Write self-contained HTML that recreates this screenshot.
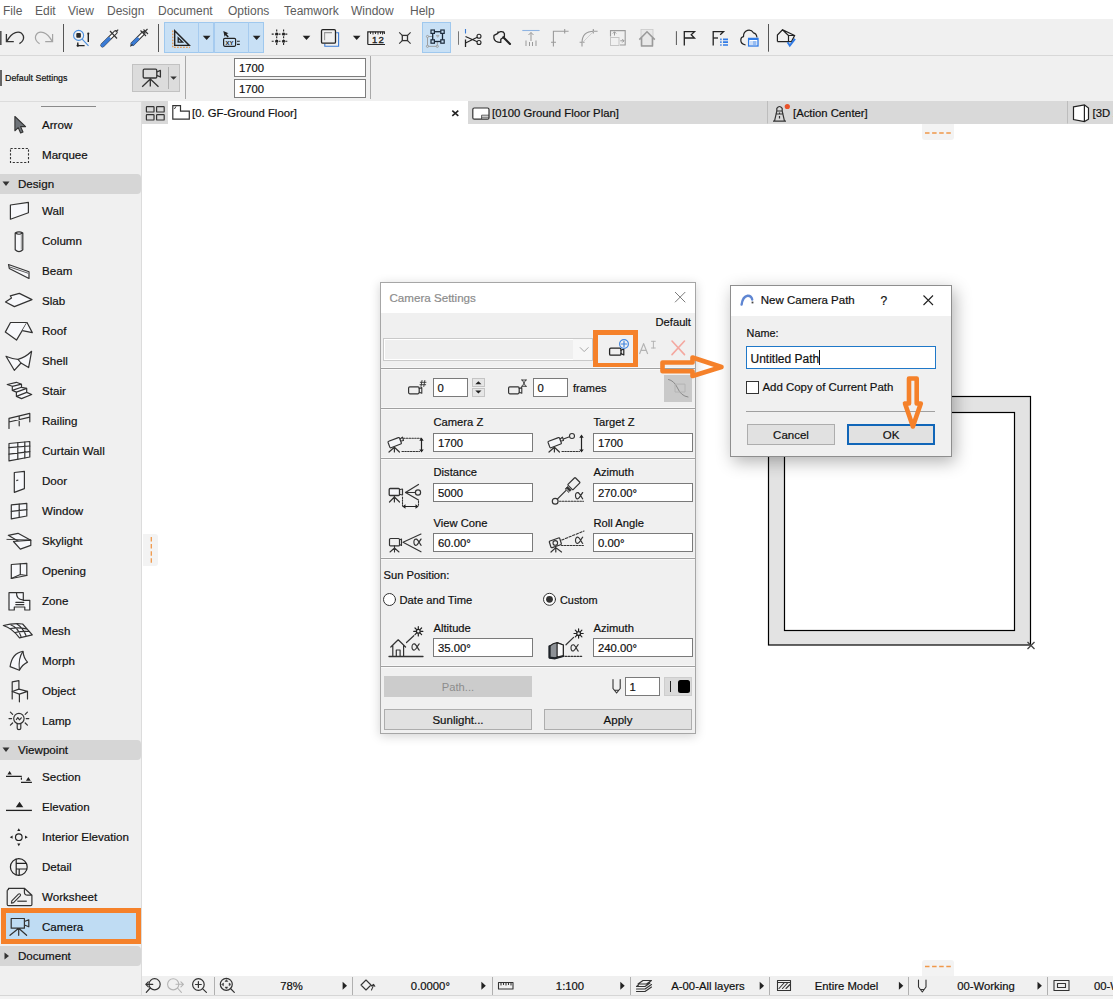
<!DOCTYPE html>
<html><head><meta charset="utf-8">
<style>
html,body{margin:0;padding:0;width:1113px;height:999px;overflow:hidden;background:#fff;}
body{font-family:"Liberation Sans",sans-serif;color:#1a1a1a;position:relative;}
.t,.r,.btn{-webkit-text-stroke:0.2px currentColor;}
.a{position:absolute;}
.t{position:absolute;line-height:1;white-space:nowrap;}
.r{position:absolute;height:20px;line-height:20px;white-space:nowrap;}
svg{position:absolute;overflow:visible;}
.mn{font-size:12px;color:#5c5c5c;top:5px;margin-left:-1px;-webkit-text-stroke:0 !important;}
.sb{font-size:11.6px;color:#111;left:42px;}
.hd{position:absolute;left:0;width:141px;height:20px;background:#d6d6d6;border-radius:0 4px 4px 0;}
.hdt{font-size:11.6px;color:#111;left:18px;}
.dl{font-size:11.2px;color:#111;}
.inp{position:absolute;background:#fff;border:1px solid #7a7a7a;box-sizing:border-box;}
.it{font-size:11px;color:#111;}
.sep{position:absolute;background:#a0a0a0;height:1px;box-shadow:0 1px 0 #fafafa,0 -1px 0 #f7f7f7;}
.btn{position:absolute;background:#e1e1e1;border:1px solid #adadad;box-sizing:border-box;text-align:center;font-size:11.2px;color:#111;}
.st{font-size:11.3px;color:#111;}
.vs{position:absolute;width:1px;background:#a0a0a0;}
.ic{fill:none;stroke:#333;stroke-width:1.2;stroke-linejoin:round;stroke-linecap:round;}

</style></head><body>
<!-- MENU -->
<div class="a" style="left:0;top:0;width:1113px;height:19px;background:#fff"></div>
<div class="t mn" style="left:4px">File</div>
<div class="t mn" style="left:36px">Edit</div>
<div class="t mn" style="left:69px">View</div>
<div class="t mn" style="left:108px">Design</div>
<div class="t mn" style="left:159px">Document</div>
<div class="t mn" style="left:229px">Options</div>
<div class="t mn" style="left:285px">Teamwork</div>
<div class="t mn" style="left:352px">Window</div>
<div class="t mn" style="left:411px">Help</div>
<!-- TOOLBAR BG -->
<div class="a" style="left:0;top:19px;width:1113px;height:36px;background:#f0f0f0"></div>
<div class="a" style="left:0;top:55px;width:1113px;height:1px;background:#d8d8d8"></div>
<!-- INFOBOX BG -->
<div class="a" style="left:0;top:56px;width:1113px;height:45px;background:#f0f0f0"></div>
<div class="a" style="left:0;top:101px;width:142px;height:1px;background:#dcdcdc"></div>
<!-- TABBAR BG -->
<div class="a" style="left:142px;top:101px;width:971px;height:23px;background:#d9d9d9"></div>
<div class="a" style="left:168px;top:101px;width:300px;height:23px;background:#fff"></div>
<!-- SIDEBAR BG -->
<div class="a" style="left:0;top:102px;width:141px;height:874px;background:#f0f0f0"></div>
<div class="a" style="left:141px;top:102px;width:1px;height:893px;background:#dcdcdc"></div>
<!-- STATUS BG -->
<div class="a" style="left:0;top:976px;width:1113px;height:19px;background:#f0f0f0"></div>
<div class="a" style="left:0;top:995px;width:1113px;height:1px;background:#d6d6d6"></div>
<div class="a" style="left:0;top:996px;width:1113px;height:3px;background:#f3f3f3"></div>
<div class="a" style="left:141px;top:976px;width:1px;height:19px;background:#dcdcdc"></div>
<!-- WALL SQUARE -->
<svg style="left:0;top:0" width="1113" height="999" viewBox="0 0 1113 999">
<path d="M768.5,396.5 H1030.5 V645 H768.5 Z M784.5,412.5 V630.5 H1014.5 V412.5 Z" fill="#e3e3e3" fill-rule="evenodd"/>
<rect x="768.5" y="396.5" width="262" height="248.5" fill="none" stroke="#000" stroke-width="1.2"/>
<rect x="784.5" y="412.5" width="230" height="218" fill="none" stroke="#000" stroke-width="1.2"/>
<path d="M1027.5,642 L1034.5,649 M1034.5,642 L1027.5,649" stroke="#444" stroke-width="1.3"/>
</svg>
<div class="a" style="left:41px;top:106px;width:55px;height:1px;background:#8a8a8a"></div>
<svg style="left:8px;top:114px" width="22" height="22" viewBox="0 0 22 22"><path d="M6.9,2.5 L6.9,16.8 L10.2,13.6 L12.6,19 L15,18 L12.6,12.6 L17.6,12.6 Z" fill="#6e7378" stroke="#333" stroke-width="1.1" stroke-linejoin="round"/></svg>
<div class="r sb" style="top:115px">Arrow</div>
<svg style="left:8px;top:144px" width="22" height="22" viewBox="0 0 22 22"><rect x="2.5" y="4.5" width="18" height="14" fill="none" stroke="#333" stroke-width="1.1" stroke-dasharray="2.2,1.6"/></svg>
<div class="r sb" style="top:145px">Marquee</div>
<div class="hd" style="top:174px"></div><svg style="left:2px;top:181px" width="8" height="6"><path d="M0.5,0.5 H7.5 L4,5 Z" fill="#333"/></svg><div class="r hdt" style="top:174px">Design</div>
<svg style="left:8px;top:200px" width="22" height="22" viewBox="0 0 22 22"><path fill="#f7f8fb" stroke="#333" stroke-width="1.2" stroke-linejoin="round" d="M2.4,5 L20.4,2.4 L20.4,12.7 L2.4,19.2 Z"/></svg>
<div class="r sb" style="top:201px">Wall</div>
<svg style="left:8px;top:230px" width="22" height="22" viewBox="0 0 22 22"><path fill="#f7f8fb" stroke="#333" stroke-width="1.2" stroke-linejoin="round" d="M7.2,3 Q11,0.6 14.8,3 V19.8 Q11,23.4 7.2,19.8 Z"/><path d="M7.2,3 Q11,5.4 14.8,3" fill="none" stroke="#333" stroke-width="1.1"/><path d="M13.3,4.5 V19.5" stroke="#999" stroke-width="1"/></svg>
<div class="r sb" style="top:231px">Column</div>
<svg style="left:8px;top:260px" width="22" height="22" viewBox="0 0 22 22"><path fill="#f7f8fb" stroke="#333" stroke-width="1.2" stroke-linejoin="round" d="M0.5,4.5 L21,11.8 V18.5 L1.3,8.5 Z"/><path d="M1.2,6.8 L20,13.2" stroke="#333" stroke-width="0.8"/></svg>
<div class="r sb" style="top:261px">Beam</div>
<svg style="left:8px;top:290px" width="22" height="22" viewBox="0 0 22 22"><path fill="#f7f8fb" stroke="#333" stroke-width="1.2" stroke-linejoin="round" d="M-2.5,12 L3.5,8 L2.3,5.8 L11.3,3.4 L24,9.6 L6.4,16.6 Z"/></svg>
<div class="r sb" style="top:291px">Slab</div>
<svg style="left:8px;top:320px" width="22" height="22" viewBox="0 0 22 22"><path fill="#f7f8fb" stroke="#333" stroke-width="1.2" stroke-linejoin="round" d="M2.5,2.5 H19 L8.5,20.1 L-2.7,12.1 Z"/><path fill="#f7f8fb" stroke="#333" stroke-width="1.2" stroke-linejoin="round" d="M19,2.5 L24.3,12.6 L14.4,10.6"/></svg>
<div class="r sb" style="top:321px">Roof</div>
<svg style="left:8px;top:350px" width="22" height="22" viewBox="0 0 22 22"><path fill="#f7f8fb" stroke="#333" stroke-width="1.2" stroke-linejoin="round" d="M-2,6.3 Q5,9.3 10,9.3 Q17,7.8 23.6,1.3 L20.6,17.6 L13,13 L6.3,20.3 Z"/><path d="M10,9.3 L13,13" fill="none" stroke="#333" stroke-width="1.1"/></svg>
<div class="r sb" style="top:351px">Shell</div>
<svg style="left:8px;top:380px" width="22" height="22" viewBox="0 0 22 22"><path fill="#f7f8fb" stroke="#333" stroke-width="1.2" stroke-linejoin="round" d="M-0.8,4.5 L8.4,2.3 L13.5,4.2 V7.3 L18.7,8.4 V12.4 L23.7,14.5 L13.5,18.6 L8.4,16.4 V12.1 L4.3,10.4 V6.3 Z"/><path d="M4.3,6.3 L13.5,4.2 M4.3,10.4 L13.5,7.3 M8.4,12.1 L18.7,8.4 M8.4,16.4 L18.7,12.4" fill="none" stroke="#333" stroke-width="1.2"/></svg>
<div class="r sb" style="top:381px">Stair</div>
<svg style="left:8px;top:410px" width="22" height="22" viewBox="0 0 22 22"><path class="ic" d="M1,8.4 L21.8,3.4 M1,12 L21.8,7.2 M1,8.4 V18.5 M11.2,6 V15.8 M21.8,3.4 V11.8"/></svg>
<div class="r sb" style="top:411px">Railing</div>
<svg style="left:8px;top:440px" width="22" height="22" viewBox="0 0 22 22"><path fill="#f7f8fb" stroke="#333" stroke-width="1.2" stroke-linejoin="round" d="M1,3.5 L21.8,1.5 V17 L1,20.8 Z"/><path class="ic" d="M1,7.6 L21.8,6 M1,14.2 L21.8,11.6 M9.8,2.6 V19.2 M16.8,2 V18"/></svg>
<div class="r sb" style="top:441px">Curtain Wall</div>
<svg style="left:8px;top:470px" width="22" height="22" viewBox="0 0 22 22"><path fill="#f7f8fb" stroke="#333" stroke-width="1.2" stroke-linejoin="round" d="M6.3,2.5 L16.4,1.3 V18.6 L6.3,22.4 Z"/><path d="M8.3,10.6 L10.3,10" stroke="#333" stroke-width="1.1"/></svg>
<div class="r sb" style="top:471px">Door</div>
<svg style="left:8px;top:500px" width="22" height="22" viewBox="0 0 22 22"><path fill="#f7f8fb" stroke="#333" stroke-width="1.2" stroke-linejoin="round" d="M3.3,4.8 L18.8,3.3 V16 L3.3,18.8 Z"/><path class="ic" d="M11.2,4 V17.4 M3.3,11.3 L18.8,9.6"/></svg>
<div class="r sb" style="top:501px">Window</div>
<svg style="left:8px;top:530px" width="22" height="22" viewBox="0 0 22 22"><path fill="#f7f8fb" stroke="#333" stroke-width="1.2" stroke-linejoin="round" d="M0.3,5.3 L10,3.3 L22.8,10.2 L12.5,12.6 Z"/><path fill="#f7f8fb" stroke="#333" stroke-width="1.2" stroke-linejoin="round" d="M5.5,11.5 L22.8,10.2 V15.4 L12.3,19.1 Z"/><path d="M-1.5,9.4 L22.8,10" stroke="#333" stroke-width="0.9"/></svg>
<div class="r sb" style="top:531px">Skylight</div>
<svg style="left:8px;top:560px" width="22" height="22" viewBox="0 0 22 22"><path fill="#f7f8fb" stroke="#333" stroke-width="1.2" stroke-linejoin="round" d="M3.3,4.5 L18.8,3.4 V15.5 L3.3,18.5 Z"/><path class="ic" d="M12.3,3.9 V14.5 L3.3,18.5 M12.3,14.5 L18.8,15.5"/></svg>
<div class="r sb" style="top:561px">Opening</div>
<svg style="left:8px;top:590px" width="22" height="22" viewBox="0 0 22 22"><path fill="#f7f8fb" stroke="#333" stroke-width="1.2" stroke-linejoin="round" d="M1,2.7 H15.3 V10.3 H21.8 V20 H16.8 V17 H6.3 V20 H1 Z"/><path class="ic" d="M8.5,2.7 Q8.3,9.5 14.8,9.8 M7.8,12.3 H15.8 M7.8,14.6 H15.8"/></svg>
<div class="r sb" style="top:591px">Zone</div>
<svg style="left:8px;top:620px" width="22" height="22" viewBox="0 0 22 22"><path fill="#f7f8fb" stroke="#333" stroke-width="1.2" stroke-linejoin="round" d="M-4.7,5.5 Q5,3 14.6,4 Q20,10 24.3,14.8 L11.5,17.9 Q4,8 -4.7,5.5 Z"/><path class="ic" d="M3,5 Q10,7.5 13,16.5 M9,4 Q15,8 18,15.5 M2.5,8.5 Q10,7 18.5,8.8 M7,12.5 Q14,11 21.5,11.5"/></svg>
<div class="r sb" style="top:621px">Mesh</div>
<svg style="left:8px;top:650px" width="22" height="22" viewBox="0 0 22 22"><path fill="#f7f8fb" stroke="#333" stroke-width="1.2" stroke-linejoin="round" d="M15,1.3 Q4,3 2.1,16.6 L11.4,20.2 Q14,15 19.5,12.1 Q15.5,8 15,1.3 Z"/><path d="M15,1.3 Q10,8 11.4,20.2" fill="none" stroke="#333" stroke-width="1.1"/></svg>
<div class="r sb" style="top:651px">Morph</div>
<svg style="left:8px;top:680px" width="22" height="22" viewBox="0 0 22 22"><path class="ic" d="M4.2,19 V1.9 L10.9,0.6 V9.1 M11.4,14.1 V21.8 M19.5,11.4 V19"/><path fill="#f7f8fb" stroke="#333" stroke-width="1.2" stroke-linejoin="round" d="M4.2,11.5 L10.9,9.1 L19.5,11.4 L11.4,14.1 Z"/></svg>
<div class="r sb" style="top:681px">Object</div>
<svg style="left:8px;top:710px" width="22" height="22" viewBox="0 0 22 22"><circle cx="10.9" cy="8.6" r="5.2" fill="none" stroke="#333" stroke-width="1.2"/><path class="ic" d="M9.2,13.8 V18.3 Q9.2,19.6 11,19.6 Q12.8,19.6 12.8,18.3 V13.8 M1,8.6 H3.6 M18.2,8.6 H20.8 M2.4,2.2 L4.6,4.4 M19.4,2.2 L17.2,4.4 M2.4,15.2 L4.6,13 M19.4,15.2 L17.2,13 M8.4,9.5 L9.8,7.6 L11.5,9.8 L13.3,7.8"/></svg>
<div class="r sb" style="top:711px">Lamp</div>
<div class="hd" style="top:740px"></div><svg style="left:2px;top:747px" width="8" height="6"><path d="M0.5,0.5 H7.5 L4,5 Z" fill="#333"/></svg><div class="r hdt" style="top:740px">Viewpoint</div>
<div class="a" style="left:1px;top:908px;width:140px;height:36px;background:#f5812a"></div>
<div class="a" style="left:6px;top:913px;width:130px;height:26px;background:#bfdcf3"></div>
<svg style="left:8px;top:766px" width="22" height="22" viewBox="0 0 22 22"><path d="M-0.6,8.4 L1.6,4.9 L3.8,8.4 Z M17.9,14.8 L20.35,11 L22.8,14.8 Z" fill="#222"/><path d="M-2,10.3 H13.8 M13.4,11.6 V13.8 M13,16.3 H23.9" stroke="#222" stroke-width="1.2" fill="none"/></svg>
<div class="r sb" style="top:767px">Section</div>
<svg style="left:8px;top:796px" width="22" height="22" viewBox="0 0 22 22"><path d="M7.8,11.2 L11.55,5.7 L15.3,11.2 Z" fill="#222"/><path d="M-2,14.4 H23.9" stroke="#222" stroke-width="1.3"/></svg>
<div class="r sb" style="top:797px">Elevation</div>
<svg style="left:8px;top:826px" width="22" height="22" viewBox="0 0 22 22"><circle cx="10.8" cy="11.2" r="3.3" fill="none" stroke="#222" stroke-width="1.2"/><path d="M10.8,2.2 L12.4,4.9 H9.2 Z M10.8,20.2 L12.4,17.5 H9.2 Z M1.8,11.2 L4.6,9.6 V12.8 Z M19.8,11.2 L17,9.6 V12.8 Z" fill="#222"/></svg>
<div class="r sb" style="top:827px">Interior Elevation</div>
<svg style="left:8px;top:856px" width="22" height="22" viewBox="0 0 22 22"><circle cx="10.8" cy="11" r="8.4" fill="none" stroke="#222" stroke-width="1.2"/><path d="M8.2,2.7 V19.3 M8.2,7.4 H18.6 M8.2,13 H19.2 M11.2,13 V19.3" fill="none" stroke="#222" stroke-width="1.2"/></svg>
<div class="r sb" style="top:857px">Detail</div>
<svg style="left:8px;top:886px" width="22" height="22" viewBox="0 0 22 22"><path class="ic" d="M0.5,3.6 Q-0.8,3.6 -0.8,4.8 V18.4 Q-0.8,19.6 0.5,19.6 H22.7 Q23.9,19.6 23.9,18.4 V9.2 L16.4,2.3 H0.5 Z M16.4,2.3 V6 Q16.4,9.2 19.5,9.2 H23.9"/><path d="M3.8,14.8 L10.4,8.2 Q11.3,7.3 12.2,8.2 Q13,9 12.2,9.9 L5.6,16.6 L3.4,17.1 Z" fill="none" stroke="#333" stroke-width="1.1" stroke-linejoin="round"/><path d="M9.3,15.2 H18.8" stroke="#333" stroke-width="1.2"/></svg>
<div class="r sb" style="top:887px">Worksheet</div>
<svg style="left:8px;top:916px" width="22" height="22" viewBox="0 0 22 22"><path class="ic" d="M3.2,2.5 H16.4 V12.2 H3.2 Z M16.4,5.5 L20.8,3.8 V10.8 L16.4,9 M10.7,12.2 V19.3 M10.7,12.2 L2,19.3 M10.7,12.2 L18.6,19.3" stroke-width="1.3"/></svg>
<div class="r sb" style="top:917px">Camera</div>
<div class="hd" style="top:946px"></div><svg style="left:4px;top:952px" width="6" height="8"><path d="M0.5,0.5 V7.5 L5,4 Z" fill="#333"/></svg><div class="r hdt" style="top:946px">Document</div>
<!-- TOOLBAR -->
<div class="a" style="left:164px;top:22px;width:100px;height:31px;background:#c8e0f5;box-sizing:border-box;border:1px solid #9fc8ee"></div>
<div class="a" style="left:198px;top:22px;width:1px;height:31px;background:#a6cbef"></div>
<div class="a" style="left:213px;top:22px;width:2px;height:31px;background:#a6cbef"></div>
<div class="a" style="left:248px;top:22px;width:1px;height:31px;background:#a6cbef"></div>
<div class="a" style="left:422px;top:22px;width:29px;height:31px;background:#c8e0f5;box-sizing:border-box;border:1px solid #9fc8ee"></div>
<svg style="left:0;top:0" width="1113" height="56" viewBox="0 0 1113 56">
<g fill="none" stroke-linecap="butt" stroke-linejoin="miter">
<rect x="0" y="31" width="1.6" height="14" fill="#555" stroke="none"/>
<!-- undo -->
<path d="M6.9,41.1 Q10.8,34.3 15.4,32.6 Q21.2,30.9 23.4,36 Q24.6,40.6 19.4,43.7" stroke="#333" stroke-width="1.35"/>
<path d="M6.4,34 V41.6 H13.8" stroke="#333" stroke-width="1.3"/>
<!-- redo -->
<path d="M52.1,41.1 Q48.2,34.3 43.6,32.6 Q37.8,30.9 35.6,36 Q34.4,40.6 39.6,43.7" stroke="#a4a4a4" stroke-width="1.2"/>
<path d="M52.6,34 V41.6 H45.2" stroke="#a4a4a4" stroke-width="1.2"/>
<line x1="63.5" y1="24" x2="63.5" y2="52" stroke="#555" stroke-width="1"/>
<!-- find -->
<circle cx="78.6" cy="35.4" r="5" stroke="#4a8fe0" stroke-width="1.1"/>
<rect x="76.3" y="33.1" width="4.6" height="4.6" rx="1" fill="#2a2a2a" stroke="none"/>
<path d="M82.2,39.2 L88.5,45.8" stroke="#4a8fe0" stroke-width="1.1"/>
<path d="M88.3,34 V42" stroke="#222" stroke-width="1.4"/><circle cx="88.3" cy="33.6" r="1.1" fill="#222" stroke="none"/>
<path d="M77.8,42.5 V45.6 H84.6" stroke="#222" stroke-width="1.4"/><circle cx="77.8" cy="45.6" r="1.2" fill="#222" stroke="none"/>
<!-- eyedropper -->
<path d="M102.5,45.3 L115.6,32.2" stroke="#333" stroke-width="4.2" stroke-linecap="round"/>
<path d="M102.5,45.3 L115.6,32.2" stroke="#fff" stroke-width="2.2" stroke-linecap="round"/>
<path d="M102.5,45.3 L109,38.8" stroke="#3a7bd5" stroke-width="3.6" stroke-linecap="round"/>
<path d="M115.6,32.2 L118.2,29.6" stroke="#333" stroke-width="1.2"/>
<path d="M110,31 L117,38.5" stroke="#333" stroke-width="1.2"/>
<!-- syringe -->
<path d="M132.5,44 L143.5,33" stroke="#333" stroke-width="4" stroke-linecap="round"/>
<path d="M132.5,44 L143.5,33" stroke="#fff" stroke-width="2" stroke-linecap="round"/>
<path d="M132.5,44 L137.5,39" stroke="#3a7bd5" stroke-width="3.4" stroke-linecap="round"/>
<path d="M130.3,46.4 L132.5,44.2" stroke="#333" stroke-width="1.1"/>
<path d="M140.5,30.5 L146,36 M143.5,29.5 L148,34 M143.5,33 L147.5,29" stroke="#333" stroke-width="1.1"/>
<line x1="158.5" y1="24" x2="158.5" y2="52" stroke="#555" stroke-width="1"/>
<!-- triangle -->
<path d="M174.7,30.8 V45.4 H189.3 Z" stroke="#222" stroke-width="1.4"/>
<path d="M178.2,37.8 V42.2 H182.6 Z" stroke="#222" stroke-width="1.3"/>
<path d="M172.8,30.5 V47.3 H190" stroke="#f08a30" stroke-width="1.1" stroke-dasharray="1.8,1.2"/>
<path d="M202.8,35.8 H210.5 L206.65,40.1 Z" fill="#222" stroke="none"/>
<!-- xy -->
<path d="M223.3,31 L228.5,33.2 L226.6,34 L228.8,36.4 L227.6,37.4 L225.5,35.2 L224.6,36.8 Z" fill="#222" stroke="none"/>
<rect x="223.6" y="38.3" width="12" height="8" rx="1.2" stroke="#222" stroke-width="1.2"/>
<text x="229.6" y="45" font-family="Liberation Sans" font-weight="bold" font-size="6" text-anchor="middle" fill="#222">XY</text>
<path d="M237,41.2 H239.8 M237,44.4 H239.8" stroke="#222" stroke-width="1.1"/>
<path d="M252.8,35.8 H260.5 L256.65,40.1 Z" fill="#222" stroke="none"/>
<!-- grid -->
<path d="M271.7,34.1 H288.6 M271.7,41.3 H288.6 M276.7,29.4 V46.2 M283.6,29.4 V46.2" stroke="#222" stroke-width="1.1" stroke-dasharray="2,1.4"/>
<rect x="275.4" y="32.8" width="2.6" height="2.6" fill="#222" stroke="none"/><rect x="282.3" y="32.8" width="2.6" height="2.6" fill="#222" stroke="none"/>
<rect x="275.4" y="40" width="2.6" height="2.6" fill="#222" stroke="none"/><rect x="282.3" y="40" width="2.6" height="2.6" fill="#222" stroke="none"/>
<path d="M302.7,35.8 H310.3 L306.5,40.1 Z" fill="#222" stroke="none"/>
<!-- layers -->
<path d="M336.2,32.8 H338.6 V46.2 H324.8 V43.8" stroke="#3a7bd5" stroke-width="1.1"/>
<rect x="321.5" y="29.6" width="14" height="13.6" rx="1.3" stroke="#222" stroke-width="1.3"/>
<path d="M324.6,40.2 V32.6 H332" stroke="#999" stroke-width="1.1"/>
<path d="M352.9,35.8 H360.5 L356.7,40.1 Z" fill="#222" stroke="none"/>
<!-- ruler -->
<path d="M367.8,44.5 V31.8 H384.3 V34 M367.8,44.5 H385" stroke="#222" stroke-width="1.2"/>
<path d="M370.5,31.8 V34 M373,31.8 V34.5 M375.5,31.8 V34 M378,31.8 V34.5 M380.5,31.8 V34 M382.5,31.8 V34.5" stroke="#222" stroke-width="0.9"/>
<text x="372" y="43.2" font-family="Liberation Sans" font-size="9.6" fill="#222" stroke="#222" stroke-width="0.35">1</text><text x="378.6" y="43.2" font-family="Liberation Sans" font-size="9.6" fill="#222" stroke="#222" stroke-width="0.35">2</text>
<!-- x -->
<path d="M399.2,32.3 L410.6,43.7 M410.6,32.3 L399.2,43.7" stroke="#333" stroke-width="1.1"/>
<rect x="402.3" y="35.4" width="5.2" height="5.2" fill="#f0f0f0" stroke="#333" stroke-width="1.3"/>
<!-- select -->
<rect x="427.5" y="36.5" width="9.8" height="9.8" stroke="#9a9a9a" stroke-width="0.9"/>
<g fill="#c8e0f5" stroke="#9a9a9a" stroke-width="0.9"><circle cx="427.5" cy="36.5" r="1.1"/><circle cx="437.3" cy="46.3" r="1.1"/><circle cx="427.5" cy="46.3" r="1.1"/></g>
<rect x="432.7" y="31.7" width="9.8" height="9.8" fill="#c8e0f5" stroke="#1c2a3a" stroke-width="1.3"/>
<g fill="#c8e0f5" stroke="#1c2a3a" stroke-width="1.2"><rect x="431" y="30" width="3.4" height="3.4"/><rect x="440.8" y="30" width="3.4" height="3.4"/><rect x="431" y="39.8" width="3.4" height="3.4"/><rect x="440.8" y="39.8" width="3.4" height="3.4"/></g>
<path d="M436.4,35.4 H439 L437.7,37.3 Z" stroke="#9a9a9a" stroke-width="0.8"/>
<line x1="458.5" y1="31.3" x2="458.5" y2="44.8" stroke="#777" stroke-width="1"/>
<!-- scissors -->
<path d="M465.5,29 V33.5" stroke="#3a7bd5" stroke-width="1.1"/>
<path d="M465.5,39.5 V47" stroke="#222" stroke-width="1.3"/>
<path d="M465.5,36.5 L477.3,41.8 M465.5,43 L477.3,37.2" stroke="#222" stroke-width="1.1"/>
<circle cx="479" cy="36.2" r="2" stroke="#222" stroke-width="1.1"/><circle cx="479" cy="42.5" r="2" stroke="#222" stroke-width="1.1"/>
<!-- axe -->
<path d="M497.9,31.4 V33.4 L494,35.4 Q493.2,39.3 495.9,41.3 Q498,42.6 500.8,42.4 V39.3 L503.2,37.4 L504.4,36.4 V33.6 Q503.6,31.2 500.6,31.7 L497.9,32.6" stroke="#222" stroke-width="1.3" stroke-linejoin="round"/>
<path d="M503.3,37.3 L510,43.9" stroke="#222" stroke-width="2.1" stroke-linecap="round"/>
<!-- trim up grey -->
<path d="M522.3,30.5 H539.6" stroke="#8fb4e2" stroke-width="1.1"/>
<path d="M531,41 V32.5 M528.5,35 L531,32.5 L533.5,35" stroke="#999" stroke-width="1"/>
<path d="M526,40.5 V46 M529.5,42 V46 M532.5,42 V46 M536,40.5 V46" stroke="#999" stroke-width="1"/>
<!-- corner grey -->
<path d="M553.4,46.5 V31.3 H568.6 M564.7,29 V33.6 M551,42.2 H556" stroke="#9a9a9a" stroke-width="1.1"/>
<!-- curve grey -->
<path d="M582,46.5 V43 Q582,31.3 594,31.3 H597.6 M593.3,29 V33.6 M579.6,42.2 H584.6" stroke="#9a9a9a" stroke-width="1.1"/>
<path d="M582.5,42.5 L593.5,31.5" stroke="#c8c8c8" stroke-width="0.8"/>
<!-- box arrows grey -->
<path d="M610.5,36.5 V30.6 H625.2 V45 H620" stroke="#9a9a9a" stroke-width="1.1"/>
<rect x="610.5" y="37.5" width="8.5" height="8" stroke="#c4c4c4" stroke-width="1"/>
<path d="M614.5,35.5 V31.8 M612.8,33.5 L614.5,31.8 L616.2,33.5 M620.3,40.8 H624 M622.3,39.1 L624,40.8 L622.3,42.5" stroke="#9a9a9a" stroke-width="1"/>
<!-- house grey -->
<rect x="641" y="29.5" width="12" height="16" fill="#e8e8e8" stroke="#c9c9c9" stroke-width="0.8"/>
<path d="M639.3,39.6 L647,31.8 L654.8,39.6 M641.6,37.5 V46 H652.4 V37.5" stroke="#9a9a9a" stroke-width="1.5"/>
<line x1="676.4" y1="31.2" x2="676.4" y2="45" stroke="#555" stroke-width="1"/>
<!-- flag -->
<path d="M684.3,45.6 V31.6 H694.5 L691.2,34.7 L694.5,38 H684.3" stroke="#222" stroke-width="1.3"/>
<!-- flag list -->
<path d="M713.2,45.6 V31.6 H723.5 L720.2,34.7" stroke="#222" stroke-width="1.3"/>
<path d="M713.2,38 H718" stroke="#222" stroke-width="1.3"/>
<path d="M720.2,39.3 H721.6 M723,39.3 H728 M720.2,42.2 H721.6 M723,42.2 H728 M720.2,45 H721.6 M723,45 H728" stroke="#2f7ae5" stroke-width="1.7"/>
<!-- cloud -->
<path d="M745.6,45 Q740.6,44 740.8,40 Q740.8,37 743.5,36.6 Q743.4,31.5 747.5,30.3 Q751.5,29.4 753.4,32.8 Q756.5,33.3 757,37.5" stroke="#222" stroke-width="1.2"/>
<rect x="748.6" y="38.4" width="9.4" height="7.6" fill="#fff" stroke="#2f7ae5" stroke-width="1.3"/>
<path d="M748.6,39.5 H758 M750.5,42 H751.5 M752.5,42 H756.5 M750.5,44 H751.5 M752.5,44 H756.5" stroke="#2f7ae5" stroke-width="1"/>
<line x1="768.5" y1="24" x2="768.5" y2="51.7" stroke="#555" stroke-width="1"/>
<!-- house check -->
<path d="M777.4,41.6 V35 L782.5,29.8 L794.6,35.5 L791.5,41.6 H777.4 M782.5,29.8 L788.5,35.5 V41.6 M788.5,35.5 H794.6" stroke="#222" stroke-width="1.2"/>
<path d="M787.6,42.3 L789.8,45.5 L795,38.8" stroke="#2f7ae5" stroke-width="2"/>
</g></svg>
<!-- INFOBOX -->
<div class="a" style="left:0;top:70px;width:1.5px;height:16px;background:#666"></div>
<div class="t" style="left:5px;top:74px;font-size:8.85px;color:#111">Default Settings</div>
<div class="a" style="left:132px;top:64px;width:48px;height:28px;background:#dcdcdc;box-sizing:border-box;border:1px solid #c2c2c2"></div>
<div class="a" style="left:168px;top:67px;width:1px;height:22px;background:#b0b0b0"></div>
<svg style="left:0;top:0" width="200" height="100" viewBox="0 0 200 100">
<g fill="none" stroke="#333" stroke-width="1.3" stroke-linejoin="round">
<rect x="143.2" y="69.2" width="13.6" height="8.8" rx="1.2"/>
<path d="M156.8,72 L160.4,70.4 V77 L156.8,75.3"/>
<path d="M150.3,78 V86.5 M150.3,79 L142.2,86.8 M150.3,79 L158.5,86.8"/>
</g>
<path d="M170.3,76.5 H176.8 L173.55,79.8 Z" fill="#333"/>
</svg>
<div class="a" style="left:185px;top:56px;width:1px;height:43px;background:#a8a8a8"></div>
<div class="inp" style="left:234px;top:58px;width:132px;height:19px;border-color:#7d7d7d"></div>
<div class="inp" style="left:234px;top:79px;width:132px;height:19px;border-color:#7d7d7d"></div>
<div class="t it" style="left:239px;top:62.5px;font-size:11.3px">1700</div>
<div class="t it" style="left:239px;top:83.5px;font-size:11.3px">1700</div>
<div class="a" style="left:370px;top:56px;width:1px;height:43px;background:#a8a8a8"></div>
<!-- TABS -->
<svg style="left:0;top:0" width="1113" height="130" viewBox="0 0 1113 130">
<g fill="none" stroke="#333" stroke-width="1.2">
<rect x="146.4" y="106.6" width="7.6" height="5.4" rx="0.6"/><rect x="156.6" y="106.6" width="7.6" height="5.4" rx="0.6"/>
<rect x="146.4" y="114.6" width="7.6" height="5.4" rx="0.6"/><rect x="156.6" y="114.6" width="7.6" height="5.4" rx="0.6"/>
<path d="M172.8,105.6 H180.5 V111.2 H189.3 V119.2 H172.8 Z" fill="#fff"/>
<path d="M174.4,109 L176,106.4" stroke-width="1"/>
<path d="M452.3,110.6 L458.3,115.8 M458.3,110.6 L452.3,115.8" stroke="#222" stroke-width="1.6"/>
<rect x="472.8" y="108" width="16.2" height="11.2" rx="1.5" fill="#fff"/>
<path d="M481.6,119 V115.2 H489 M481.6,117.2 H489" stroke-width="0.8"/>
<line x1="767.5" y1="101" x2="767.5" y2="123.5" stroke="#bdbdbd" stroke-width="1"/>
<path d="M773,121.2 H786 M774.5,121.2 L776.8,111 H782.2 L784.5,121.2 M776.8,111 V108.4 Q779.5,104.6 782.2,108.4 V111 M779.5,112.5 V114.5 M779.5,116 V118.5 M775.5,114 H783.5" stroke="#333" stroke-width="1.2"/>
<circle cx="787.3" cy="106.5" r="2.6" fill="#e8522a" stroke="none"/>
<line x1="1067.5" y1="101" x2="1067.5" y2="123.5" stroke="#bdbdbd" stroke-width="1"/>
<path d="M1073.5,106.8 L1084.4,104.8 L1088.5,108 V119.2 L1084.4,121.5 L1073.5,119.5 Z M1084.4,104.8 V121.5" fill="#fff" stroke="#222" stroke-width="1.2"/>
</g>
</svg>
<div class="t" style="left:192px;top:107.5px;font-size:11.3px;color:#111">[0. GF-Ground Floor]</div>
<div class="t" style="left:492px;top:107.5px;font-size:11.3px;color:#111">[0100 Ground Floor Plan]</div>
<div class="t" style="left:793px;top:107.5px;font-size:11.3px;color:#111">[Action Center]</div>
<div class="t" style="left:1092.5px;top:107.5px;font-size:11.3px;color:#111">[3D / All]</div>
<!-- canvas markers -->
<div class="a" style="left:922px;top:124px;width:32px;height:16px;background:#f3f3f3;border-radius:0 0 3px 3px"></div>
<svg style="left:0;top:0" width="1113" height="999"><path d="M925,133 H951" stroke="#f0984a" stroke-width="1.3" stroke-dasharray="4.5,2.6"/></svg>
<div class="a" style="left:143px;top:534px;width:15px;height:32px;background:#f3f3f3;border-radius:0 3px 3px 0"></div>
<svg style="left:0;top:0" width="1113" height="999"><path d="M151.3,537 V563" stroke="#f0984a" stroke-width="1.3" stroke-dasharray="4.5,2.6"/></svg>
<div class="a" style="left:922px;top:960px;width:32px;height:16px;background:#f3f3f3;border-radius:3px 3px 0 0"></div>
<svg style="left:0;top:0" width="1113" height="999"><path d="M925,966.5 H951" stroke="#f0984a" stroke-width="1.3" stroke-dasharray="4.5,2.6"/></svg>
<!-- CAMERA SETTINGS DIALOG -->
<div class="a" style="left:380px;top:282px;width:316px;height:452px;background:#f0f0f0;box-sizing:border-box;border:1px solid #a6a6a6;box-shadow:0 2px 10px rgba(0,0,0,0.18)"></div>
<div class="a" style="left:381px;top:283px;width:314px;height:30px;background:#fff"></div>
<div class="t" style="left:389.5px;top:291.5px;font-size:11.6px;color:#8c8c8c">Camera Settings</div>
<div class="t dl" style="left:655.5px;top:317px;font-size:11.2px">Default</div>
<div class="a" style="left:383px;top:338px;width:210px;height:23px;background:#efefef;box-sizing:border-box;border:1px solid #c9c9c9;box-shadow:inset 0 0 0 1px #fff"></div>
<div class="a" style="left:573px;top:339px;width:19px;height:21px;background:#f7f7f7"></div>
<div class="a" style="left:593px;top:330px;width:45px;height:38px;box-sizing:border-box;border:5px solid #f5812a"></div>
<div class="sep" style="left:381px;top:368px;width:314px"></div>
<div class="inp" style="left:433px;top:378px;width:35px;height:19px"></div>
<div class="t it" style="left:437.5px;top:382.5px;font-size:11.3px">0</div>
<div class="a" style="left:472px;top:378px;width:13px;height:9px;background:#e6e6e6;border:1px solid #c4c4c4;box-sizing:border-box"></div>
<div class="a" style="left:472px;top:388px;width:13px;height:9px;background:#e6e6e6;border:1px solid #c4c4c4;box-sizing:border-box"></div>
<div class="inp" style="left:533px;top:378px;width:35px;height:19px"></div>
<div class="t it" style="left:537.5px;top:382.5px;font-size:11.3px">0</div>
<div class="t dl" style="left:573px;top:383px;font-size:11px">frames</div>
<div class="a" style="left:664px;top:375px;width:28px;height:27px;background:#c9c9c9"></div>
<div class="sep" style="left:381px;top:408px;width:314px"></div>
<div class="t dl" style="left:433.5px;top:417px">Camera Z</div>
<div class="t dl" style="left:593.5px;top:417px">Target Z</div>
<div class="inp" style="left:433px;top:433px;width:100px;height:19px"></div>
<div class="inp" style="left:593px;top:433px;width:100px;height:19px"></div>
<div class="t it" style="left:438px;top:437.5px;font-size:11.3px">1700</div>
<div class="t it" style="left:598px;top:437.5px;font-size:11.3px">1700</div>
<div class="sep" style="left:381px;top:458px;width:314px"></div>
<div class="t dl" style="left:433.5px;top:467.2px">Distance</div>
<div class="t dl" style="left:593.5px;top:467.2px">Azimuth</div>
<div class="inp" style="left:433px;top:483px;width:100px;height:19px"></div>
<div class="inp" style="left:593px;top:483px;width:100px;height:19px"></div>
<div class="t it" style="left:438px;top:487.5px;font-size:11.3px">5000</div>
<div class="t it" style="left:598px;top:487.5px;font-size:11.3px">270.00°</div>
<div class="t dl" style="left:433.5px;top:517.5px">View Cone</div>
<div class="t dl" style="left:593.5px;top:517.5px">Roll Angle</div>
<div class="inp" style="left:433px;top:533px;width:100px;height:19px"></div>
<div class="inp" style="left:593px;top:533px;width:100px;height:19px"></div>
<div class="t it" style="left:438px;top:537.5px;font-size:11.3px">60.00°</div>
<div class="t it" style="left:598px;top:537.5px;font-size:11.3px">0.00°</div>
<div class="sep" style="left:381px;top:558px;width:314px"></div>
<div class="t dl" style="left:383.5px;top:569.5px">Sun Position:</div>
<div class="t dl" style="left:399.5px;top:594.7px">Date and Time</div>
<div class="t dl" style="left:560px;top:594.7px;font-size:10.9px">Custom</div>
<div class="t dl" style="left:433.5px;top:622.6px">Altitude</div>
<div class="t dl" style="left:593.5px;top:622.6px">Azimuth</div>
<div class="inp" style="left:433px;top:638px;width:100px;height:19px"></div>
<div class="inp" style="left:593px;top:638px;width:100px;height:19px"></div>
<div class="t it" style="left:438px;top:642.5px;font-size:11.3px">35.00°</div>
<div class="t it" style="left:598px;top:642.5px;font-size:11.3px">240.00°</div>
<div class="sep" style="left:381px;top:666px;width:314px"></div>
<div class="a" style="left:384px;top:676px;width:148px;height:21px;background:#cccccc;line-height:23px;text-align:center;font-size:11.2px;color:#8c8c8c">Path...</div>
<div class="inp" style="left:625px;top:677px;width:35px;height:19px"></div>
<div class="t it" style="left:629.5px;top:681.5px;font-size:11.3px">1</div>
<div class="a" style="left:664px;top:677px;width:28px;height:19px;background:#dadada;border:1px solid #cdcdcd;box-sizing:border-box"></div>
<div class="a" style="left:670px;top:681px;width:1.2px;height:11px;background:#222"></div>
<div class="a" style="left:678px;top:680px;width:11.5px;height:13px;background:#000;border-radius:2.5px"></div>
<div class="btn" style="left:384px;top:709px;width:148px;height:21px;line-height:21px;font-size:11.5px">Sunlight...</div>
<div class="btn" style="left:544px;top:709px;width:148px;height:21px;line-height:21px;font-size:11.5px">Apply</div>
<svg style="left:0;top:0" width="1113" height="999" viewBox="0 0 1113 999">
<g fill="none" stroke="#333" stroke-width="1.1" stroke-linejoin="round" stroke-linecap="round">
<path d="M675.3,292.3 L685,302 M685,292.3 L675.3,302" stroke="#7a7a7a" stroke-width="1"/>
<path d="M580.2,347.6 L584.2,351.6 L588.2,347.6" stroke="#a8a8a8" stroke-width="1"/>
<!-- camera plus -->
<rect x="609.6" y="348.2" width="11.4" height="7" rx="1.2" stroke="#222" stroke-width="1.3"/>
<path d="M621,350.3 L623.8,349 V355 L621,353.5" stroke="#222" stroke-width="1.2"/>
<circle cx="624" cy="344" r="4.4" fill="#f0f0f0" stroke="#3f86e0" stroke-width="1.2"/>
<path d="M624,341.4 V346.6 M621.4,344 H626.6" stroke="#3f86e0" stroke-width="1.2"/>
<!-- A I -->
<path d="M639.5,354 L643.6,343.6 L647.7,354 M641,350.3 H646.2" stroke="#b3b3b3" stroke-width="1.2" stroke-linecap="butt"/>
<path d="M651.5,341.3 H655.3 M653.4,341.3 V348 M651.5,348 H655.3" stroke="#b3b3b3" stroke-width="1"/>
<path d="M672,341 L684.5,354.6 M684.5,341 L672,354.6" stroke="#f4a8a0" stroke-width="1.6"/>
<!-- frame icons -->
<rect x="408.6" y="386.8" width="10.6" height="7" rx="1.2" stroke="#333" stroke-width="1.2"/>
<path d="M419.2,388.6 L421.8,387.6 V393.2 L419.2,392.2" stroke="#333"/>
<path d="M422,380.5 L421,386.5 M424.8,380.5 L423.8,386.5 M420.3,382.3 H426 M420,384.7 H425.7" stroke="#333" stroke-width="0.9"/>
<rect x="508.6" y="386.8" width="10.6" height="7" rx="1.2" stroke="#333" stroke-width="1.2"/>
<path d="M519.2,388.6 L521.8,387.6 V393.2 L519.2,392.2" stroke="#333"/>
<path d="M521.5,380 H526.5 M521.5,386.3 H526.5 M522.3,380 L525.7,386.3 M525.7,380 L522.3,386.3" stroke="#333" stroke-width="0.9"/>
<path d="M475.3,384.3 L478.4,381.3 L481.5,384.3 Z M475.3,390.5 L478.4,393.5 L481.5,390.5 Z" fill="#222" stroke="none"/>
<!-- curve button icon -->
<path d="M668.5,379.5 Q674,380.5 677.5,388 Q681,396 688,397" stroke="#8a8a8a" stroke-width="1"/>
<path d="M675,384.5 V392 H685 V384.5 Z" stroke="#b0b0b0" stroke-width="0.8"/>
<!-- camera Z icon -->
<g transform="translate(385,430)">
<path d="M3.7,11.3 L13.4,7.6 Q14.3,7.3 14.6,8.2 L16.3,12.8 Q16.6,13.7 15.7,14 L6,17.7 Q5.1,18 4.8,17.1 L3.1,12.5 Q2.8,11.6 3.7,11.3 Z" fill="#f4f5f8" stroke="#333" stroke-width="1.2"/>
<path d="M15.4,8.8 L17.5,7.2 L18.5,10.5 L16.3,11" stroke="#333" stroke-width="1.1"/>
<path d="M9.4,17.5 V22 M9.4,17.2 L4,22 M9.4,17.2 L14.4,22" stroke="#333" stroke-width="1.2"/>
<path d="M18.5,8.2 H35.5 M17,21.5 H34.5" stroke="#333" stroke-width="1.1" stroke-dasharray="1.5,1.3"/>
<path d="M36.5,9.5 V20.5" stroke="#222" stroke-width="1.2"/>
<path d="M34.3,10.8 L36.5,7.6 L38.7,10.8 Z M34.3,19.4 L36.5,22.6 L38.7,19.4 Z" fill="#222" stroke="none"/>
</g>
<!-- target Z icon -->
<g transform="translate(545,430)">
<path d="M3.7,11.3 L13.4,7.6 Q14.3,7.3 14.6,8.2 L16.3,12.8 Q16.6,13.7 15.7,14 L6,17.7 Q5.1,18 4.8,17.1 L3.1,12.5 Q2.8,11.6 3.7,11.3 Z" fill="#f4f5f8" stroke="#333" stroke-width="1.2"/>
<path d="M15.4,8.8 L17.5,7.2 L18.5,10.5 L16.3,11" stroke="#333" stroke-width="1.1"/>
<path d="M9.4,17.5 V22 M9.4,17.2 L4,22 M9.4,17.2 L14.4,22" stroke="#333" stroke-width="1.2"/>
<path d="M18.5,9 L24.5,6.8" stroke="#333" stroke-width="1.2"/>
<circle cx="27" cy="6" r="2.5" stroke="#333" stroke-width="1.1"/>
<path d="M17,21.5 H34.5" stroke="#333" stroke-width="1.1" stroke-dasharray="1.5,1.3"/>
<path d="M36.5,6.5 V20.5" stroke="#222" stroke-width="1.2"/>
<path d="M34.3,7.8 L36.5,4.6 L38.7,7.8 Z M34.3,19.4 L36.5,22.6 L38.7,19.4 Z" fill="#222" stroke="none"/>
</g>
<!-- distance icon -->
<g transform="translate(385,480)">
<rect x="4.2" y="8.5" width="10.3" height="7" rx="1" fill="#f4f5f8" stroke="#333" stroke-width="1.3"/>
<path d="M15,9.5 L17.5,9 V15 L15,14.5" stroke="#333" stroke-width="1.2"/>
<path d="M9.4,15.5 V22 M9.4,17 L4.5,22 M9.4,17 L14.5,22" stroke="#333" stroke-width="1.2"/>
<path d="M20.5,12.5 L33.5,4.5 M20.5,12.5 L33.5,20 M20.5,12.5 H30.5" stroke="#333" stroke-width="1.2"/>
<circle cx="33" cy="12.5" r="2.6" stroke="#333" stroke-width="1.2"/>
<path d="M17.5,17 V26 M33.5,21 V26" stroke="#333" stroke-width="1.1" stroke-dasharray="1.5,1.3"/>
<path d="M19.5,26.5 H31.5" stroke="#222" stroke-width="1.2"/>
<path d="M20.5,24.3 L17.3,26.5 L20.5,28.7 Z M30.5,24.3 L33.7,26.5 L30.5,28.7 Z" fill="#222" stroke="none"/>
</g>
<!-- view cone icon -->
<g transform="translate(388.5,533.5)">
<rect x="1" y="5" width="10" height="7.4" rx="1" stroke="#333" stroke-width="1.2"/>
<path d="M11,6.5 L13,5.5 V12 L11,11" stroke="#333" stroke-width="1.1"/>
<path d="M6,12.4 V18.5 M6,14.5 L1.5,18.5 M6,14.5 L10.5,18.5" stroke="#333" stroke-width="1.1"/>
<path d="M32.5,0.5 L14.5,8.7 L32.5,18.3" stroke="#333" stroke-width="1.1"/>
</g>
<!-- azimuth icon -->
<circle cx="555.2" cy="501.3" r="2.9" stroke="#333" stroke-width="1.2"/>
<path d="M557.3,499.2 L565.8,490.7" stroke="#333" stroke-width="1.2"/>
<path d="M568.2,484.2 L574.4,478 Q575,477.4 575.6,478 L579.6,482 Q580.2,482.6 579.6,483.2 L573.4,489.4 Q572.8,490 572.2,489.4 L568.2,485.4 Q567.6,484.8 568.2,484.2 Z" stroke="#333" stroke-width="1.2"/>
<path d="M565.4,488.6 L567.6,486.4 L571.2,490 L569,492.2 Z" fill="#333" stroke="#333" stroke-width="0.8"/>
<path d="M566.6,489 L569.8,492.2" stroke="#f0f0f0" stroke-width="0.7"/>
<path d="M559.5,501.3 H583.5" stroke="#333" stroke-width="1.1" stroke-dasharray="1.6,1.3"/>
<!-- roll angle icon -->
<path d="M550,541 L558.5,538 Q559.5,537.7 559.8,538.6 L561.3,543.5 Q561.6,544.5 560.6,544.8 L552.2,547.6 Q551.2,547.9 550.9,547 L549.4,542.2 Q549.1,541.3 550,541 Z" stroke="#333" stroke-width="1.2"/>
<circle cx="555.3" cy="542.9" r="2.3" stroke="#333" stroke-width="1.1"/>
<path d="M555.8,547.5 V552 M555.8,547.6 L551,552 M555.8,547.6 L561.5,552" stroke="#333" stroke-width="1.2"/>
<path d="M561.8,540 L584,531" stroke="#333" stroke-width="1.1" stroke-dasharray="2.3,1.6"/>
<path d="M561.5,545.5 H584.5" stroke="#333" stroke-width="1.1" stroke-dasharray="1.6,1.3"/>
<!-- altitude icon -->
<path d="M389,656.5 H423" stroke="#333" stroke-width="1.3"/>
<path d="M390.8,647 L398.2,639.8 L405.6,647 M392.8,645 V656.5 M403.6,645 V656.5 M396.3,656.5 V650 H400.1 V656.5" stroke="#333" stroke-width="1.2"/>
<path d="M406.5,642.5 L413.8,635.7" stroke="#333" stroke-width="1.2"/>
<circle cx="418.3" cy="631.3" r="1.9" fill="#f0f0f0" stroke="#222" stroke-width="1.3"/><path d="M418.3,626.7 V628.7 M418.3,633.9 V635.9 M413.7,631.3 H415.7 M420.9,631.3 H422.9 M415.0,628.0 L416.4,629.4 M421.6,634.6 L420.2,633.2 M421.6,628.0 L420.2,629.4 M415.0,634.6 L416.4,633.2" stroke="#222" stroke-width="1.2"/>
<!-- sun azimuth icon -->
<path d="M549.5,646.3 Q553,643 557.1,642.6 L563.3,645 V656 L555.1,658.3 L549.5,657.6 Z" fill="#8d9196" stroke="#222" stroke-width="1.2"/>
<path d="M549.5,646.3 V657.6 L555.1,658.3 L563.3,656" fill="none" stroke="#1e2328" stroke-width="2.2"/>
<path d="M557.1,642.8 L563.3,645 V655.6 L557.1,657.2 Z" fill="#fafafa" stroke="#222" stroke-width="1.2"/>
<path d="M566,644.8 L573.6,637.4" stroke="#333" stroke-width="1.2"/>
<circle cx="578.6" cy="633.5" r="1.9" fill="#f0f0f0" stroke="#222" stroke-width="1.3"/><path d="M578.6,628.9 V630.9 M578.6,636.1 V638.1 M574.0,633.5 H576.0 M581.2,633.5 H583.2 M575.3,630.2 L576.7,631.6 M581.9,636.8 L580.5,635.4 M581.9,630.2 L580.5,631.6 M575.3,636.8 L576.7,635.4" stroke="#222" stroke-width="1.2"/>
<path d="M565,656.3 H582.5" stroke="#333" stroke-width="1.2" stroke-dasharray="1.7,1.3"/>
</g>
</svg>
<svg style="left:0;top:0" width="1113" height="999" viewBox="0 0 1113 999">
<g fill="none" stroke="#333" stroke-width="1.1" stroke-linejoin="round" stroke-linecap="round">
<path transform="translate(413.5,538.6)" d="M7.6,0.4 C6.1,2 4.6,6 2.9,6.6 C1.3,7.1 0.4,5.6 0.4,3.5 C0.4,1.4 1.5,0.2 2.9,0.5 C4.6,0.9 6.1,5 7.6,6.8" fill="none" stroke="#333" stroke-width="1.15"/>
<path transform="translate(575.1,492.1)" d="M7.6,0.4 C6.1,2 4.6,6 2.9,6.6 C1.3,7.1 0.4,5.6 0.4,3.5 C0.4,1.4 1.5,0.2 2.9,0.5 C4.6,0.9 6.1,5 7.6,6.8" fill="none" stroke="#333" stroke-width="1.15"/>
<path transform="translate(575.1,536.7)" d="M7.6,0.4 C6.1,2 4.6,6 2.9,6.6 C1.3,7.1 0.4,5.6 0.4,3.5 C0.4,1.4 1.5,0.2 2.9,0.5 C4.6,0.9 6.1,5 7.6,6.8" fill="none" stroke="#333" stroke-width="1.15"/>
<path transform="translate(411.6,643.4)" d="M7.6,0.4 C6.1,2 4.6,6 2.9,6.6 C1.3,7.1 0.4,5.6 0.4,3.5 C0.4,1.4 1.5,0.2 2.9,0.5 C4.6,0.9 6.1,5 7.6,6.8" fill="none" stroke="#333" stroke-width="1.15"/>
<path transform="translate(570.6,644.3)" d="M7.6,0.4 C6.1,2 4.6,6 2.9,6.6 C1.3,7.1 0.4,5.6 0.4,3.5 C0.4,1.4 1.5,0.2 2.9,0.5 C4.6,0.9 6.1,5 7.6,6.8" fill="none" stroke="#333" stroke-width="1.15"/>
<!-- pen icon -->
<path d="M613,679.5 V688.5 L616.6,693 L620.2,688.5 V679.5 M614.8,690.3 H618.4" stroke="#333" stroke-width="1.1"/>
<!-- radio -->
<circle cx="389.5" cy="599.5" r="6" fill="#fff" stroke="#333" stroke-width="1"/>
<circle cx="549.5" cy="599.3" r="6" fill="#fff" stroke="#333" stroke-width="1"/>
<circle cx="549.5" cy="599.3" r="3.4" fill="#333" stroke="none"/>
</g>
</svg>
<!-- NEW CAMERA PATH DIALOG -->
<div class="a" style="left:730px;top:285px;width:222px;height:172px;background:#f0f0f0;box-sizing:border-box;border:1px solid #8e8e8e;box-shadow:3px 5px 16px rgba(0,0,0,0.3)"></div>
<div class="a" style="left:731px;top:286px;width:220px;height:30px;background:#fff"></div>
<div class="t" style="left:760.8px;top:295.3px;font-size:11.5px;color:#111">New Camera Path</div>
<div class="t" style="left:880.5px;top:294.5px;font-size:12px;color:#111">?</div>
<div class="t dl" style="left:746.6px;top:327.8px;font-size:10.8px">Name:</div>
<div class="a" style="left:746px;top:346px;width:190px;height:23px;background:#fff;box-sizing:border-box;border:1px solid #1f78c8"></div>
<div class="t" style="left:750.5px;top:352.5px;font-size:12px;color:#111">Untitled Path</div>
<div class="a" style="left:819px;top:350px;width:1px;height:15px;background:#111"></div>
<div class="a" style="left:746px;top:381px;width:13px;height:13px;background:#fff;box-sizing:border-box;border:1px solid #333"></div>
<div class="t dl" style="left:762.4px;top:382px;font-size:11.45px">Add Copy of Current Path</div>
<div class="a" style="left:746px;top:411px;width:189px;height:1px;background:#a0a0a0"></div>
<div class="btn" style="left:747px;top:424px;width:88px;height:21px;line-height:21px;font-size:11.5px">Cancel</div>
<div class="btn" style="left:847px;top:424px;width:88px;height:21px;line-height:19px;font-size:11.5px;border:2px solid #1166b8">OK</div>
<svg style="left:0;top:0" width="1113" height="999" viewBox="0 0 1113 999">
<path d="M741.6,304.6 Q742.8,296.4 747.6,295.8 Q751.4,295.6 752.2,299.6" fill="none" stroke="#5f86d2" stroke-width="2.4" stroke-linecap="round"/>
<rect x="751.6" y="301.6" width="1.8" height="1.8" fill="#444"/>
<path d="M923.5,295.5 L933,305 M933,295.5 L923.5,305" stroke="#222" stroke-width="1.1"/>
<!-- orange arrows -->
<path d="M662.5,362.5 H692.5 V357.5 L721.5,367 L692.5,376 V371.2 H662.5 Z" fill="none" stroke="#f5812a" stroke-width="4.6" stroke-linejoin="round"/>
<path d="M909,378.5 H916.7 V403.5 H920.8 L912.9,426.5 L905,403.5 H909 Z" fill="none" stroke="#f5812a" stroke-width="4.6" stroke-linejoin="round"/>
</svg>
<!-- STATUS BAR -->
<div class="vs" style="left:213.5px;top:977px;height:18px;background:#b0b0b0"></div>
<div class="vs" style="left:352px;top:977px;height:18px;background:#b0b0b0"></div>
<div class="vs" style="left:491.5px;top:977px;height:18px;background:#b0b0b0"></div>
<div class="vs" style="left:630px;top:977px;height:18px;background:#b0b0b0"></div>
<div class="vs" style="left:769px;top:977px;height:18px;background:#b0b0b0"></div>
<div class="vs" style="left:908px;top:977px;height:18px;background:#b0b0b0"></div>
<div class="vs" style="left:1047px;top:977px;height:18px;background:#b0b0b0"></div>
<div class="t st" style="left:291.6px;top:981px;transform:translateX(-50%)">78%</div>
<div class="t st" style="left:430.4px;top:981px;transform:translateX(-50%)">0.0000°</div>
<div class="t st" style="left:570px;top:981px;transform:translateX(-50%)">1:100</div>
<div class="t st" style="left:708px;top:981px;transform:translateX(-50%)">A-00-All layers</div>
<div class="t st" style="left:846.5px;top:981px;transform:translateX(-50%)">Entire Model</div>
<div class="t st" style="left:986px;top:981px;transform:translateX(-50%)">00-Working</div>
<div class="t st" style="left:1094px;top:981px">00-Working</div>
<svg style="left:0;top:0" width="1113" height="999" viewBox="0 0 1113 999">
<g fill="#222" stroke="none">
<path d="M342.6,981.8 V989.8 L347,985.8 Z"/><path d="M481.4,981.8 V989.8 L485.8,985.8 Z"/><path d="M620.3,981.8 V989.8 L624.7,985.8 Z"/>
<path d="M759.7,981.8 V989.8 L764.1,985.8 Z"/><path d="M898.9,981.8 V989.8 L903.3,985.8 Z"/><path d="M1037.5,981.8 V989.8 L1041.9,985.8 Z"/>
</g>
<g fill="none" stroke="#333" stroke-width="1.1" stroke-linejoin="round" stroke-linecap="round">
<!-- zoom back -->
<circle cx="154.6" cy="984.3" r="5.6" stroke-width="1.2"/>
<path d="M150.2,988 L146.3,992.3" stroke-width="1.2"/>
<path d="M145.8,984.3 H152.8 M148.3,981.8 L145.8,984.3 L148.3,986.8" stroke-width="1.2"/>
<!-- zoom fwd grey -->
<g stroke="#b4b4b4"><circle cx="173.2" cy="984.3" r="5.6" stroke-width="1.1"/><path d="M177.5,988 L181.4,992.3"/><path d="M176,984.3 H183.4 M180.9,981.8 L183.4,984.3 L180.9,986.8"/></g>
<!-- zoom in -->
<circle cx="198.4" cy="984.5" r="5.8" stroke-width="1.2"/><path d="M202.5,988.6 L206.4,992.4" stroke-width="1.2"/><path d="M198.4,981.6 V987.4 M195.5,984.5 H201.3" stroke-width="1.2"/>
<!-- fit -->
<circle cx="226.3" cy="984.3" r="6" stroke-width="1.2"/><path d="M230.5,988.5 L234.3,992.4" stroke-width="1.2"/>
<path d="M226.3,979.8 L225,981.5 H227.6 Z M226.3,988.8 L225,987.1 H227.6 Z M221.8,984.3 L223.5,983 V985.6 Z M230.8,984.3 L229.1,983 V985.6 Z" fill="#333" stroke-width="0.5"/>
<!-- rotate -->
<path d="M361,985 L366,980 L371,985 L366,990 Z M371.5,990 Q373,987.5 373.5,984.5 M371.5,986 L373.5,984.3 L374.8,986.3"/>
<!-- ruler -->
<path d="M498.5,982.5 H513 V989 H498.5 Z M501,982.5 V985 M503.5,982.5 V984.5 M506,982.5 V985 M508.5,982.5 V984.5 M511,982.5 V985"/>
<!-- layers -->
<path d="M638,984 L643,980.5 H651.5 L646.5,984 Z M636.5,986.5 L638.5,985 M636.5,986.5 H645 L650,983 M636.5,989 H645 L651.5,984.5 M636.5,991.5 H645 L651.5,987"/>
<!-- entire model -->
<path d="M777.5,980.5 H790.5 V990.5 H777.5 Z M777.5,982.5 H790.5 M779,988.5 L784,983 M782.5,988.5 L787.5,983 M786,988.5 L790,984.5"/>
<!-- pen -->
<path d="M918.5,980 V987 L922.3,992 L926,987 V980 M920.5,989.5 H924"/>
<!-- box -->
<path d="M1054,980.5 H1069 V990.5 H1054 Z M1057.5,983.5 H1065.5 V987.5 H1057.5 Z"/>
</g>
</svg>

</body></html>
